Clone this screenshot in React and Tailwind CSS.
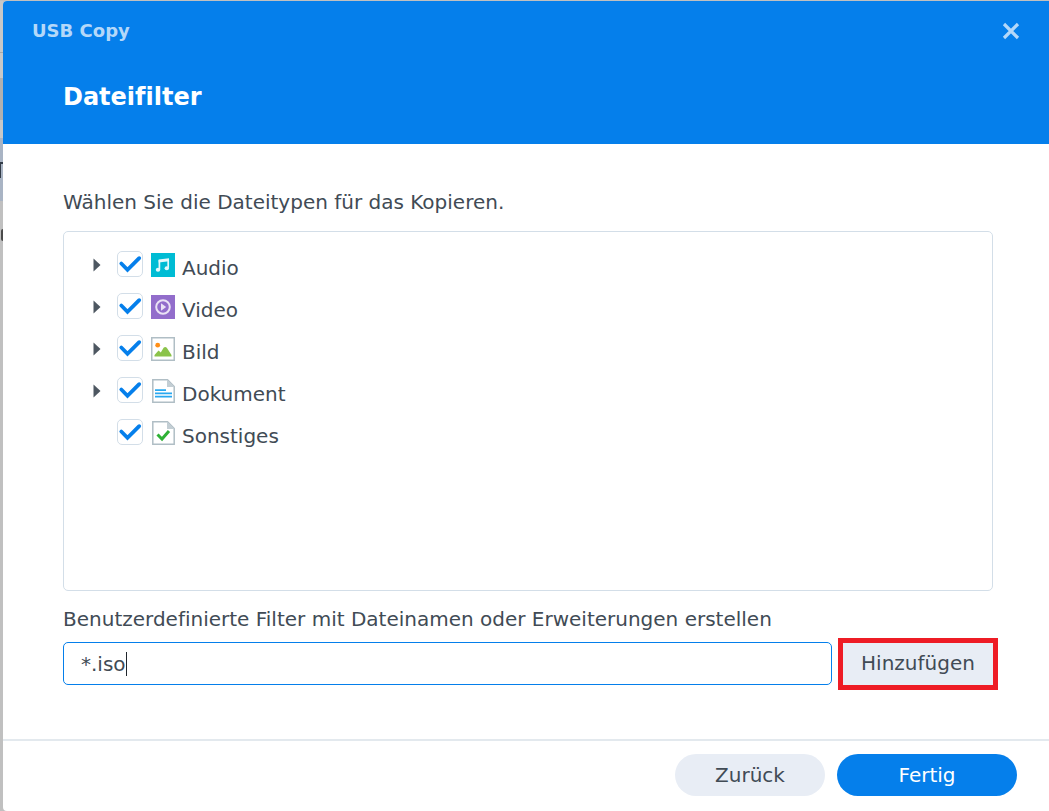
import React, { useState } from 'react';

const AudioIcon = () => (
  <svg width="24" height="24" viewBox="0 0 24 24" aria-hidden="true">
    <rect width="24" height="24" fill="#00bcd4" />
    <path d="M8.4 16.5 V7 M17.2 14.8 V6" fill="none" stroke="#e6f8fb" strokeWidth="1.7" />
    <path d="M7.6 6.4 L18 5.2 V8.2 L7.6 9.4 Z" fill="#e6f8fb" />
    <ellipse cx="7" cy="16.7" rx="2.2" ry="2" fill="#e6f8fb" />
    <ellipse cx="15.8" cy="15.2" rx="2.2" ry="2" fill="#e6f8fb" />
  </svg>
);

const VideoIcon = () => (
  <svg width="24" height="24" viewBox="0 0 24 24" aria-hidden="true">
    <rect width="24" height="24" fill="#926dcb" />
    <circle cx="12" cy="12" r="6.8" fill="none" stroke="#eae2f5" strokeWidth="2" />
    <path d="M10 8.2 L15.2 12 L10 15.8 Z" fill="#eae2f5" />
  </svg>
);

const ImageIcon = () => (
  <svg width="24" height="24" viewBox="0 0 24 24" aria-hidden="true">
    <rect x="0.75" y="0.75" width="22.5" height="22.5" fill="#fff" stroke="#b0bec5" strokeWidth="1.5" />
    <circle cx="6.7" cy="8.2" r="2.4" fill="#ff8f17" />
    <path
      d="M3.5 19.5 V18 L7.5 13.5 L9.8 15.4 L12.6 10.8 Q14.2 9.4 15.8 10.8 L20.5 18 V19.5 Z"
      fill="#8bc34a"
    />
  </svg>
);

const Sheet = ({ children }) => (
  <svg width="24" height="24" viewBox="0 0 24 24" aria-hidden="true">
    <path d="M1.8 0.8 H16.5 L23.2 7.5 V23.2 H1.8 Z" fill="#fff" stroke="#b0bec5" strokeWidth="1.5" />
    <path d="M16 0.5 L23.5 8 H16 Z" fill="#c3ced4" />
    {children}
  </svg>
);

const DocumentIcon = () => (
  <Sheet>
    <path d="M4 11.2 H15 M4 14.4 H21 M4 17.6 H21" stroke="#29a8f0" strokeWidth="1.7" />
  </Sheet>
);

const OtherIcon = () => (
  <Sheet>
    <path d="M6.5 13.5 L11 18 L18 10" fill="none" stroke="#2eb135" strokeWidth="3" />
  </Sheet>
);

const fileTypes = [
  { id: 'audio', label: 'Audio', Icon: AudioIcon, expandable: true },
  { id: 'video', label: 'Video', Icon: VideoIcon, expandable: true },
  { id: 'image', label: 'Bild', Icon: ImageIcon, expandable: true },
  { id: 'document', label: 'Dokument', Icon: DocumentIcon, expandable: true },
  { id: 'other', label: 'Sonstiges', Icon: OtherIcon, expandable: false },
];

const FileTypeRow = ({ type, checked, onToggle }) => {
  const { id, label, Icon, expandable } = type;

  return (
    <li className="flex h-[42px] items-center">
      <div className="flex w-6 items-center">
        {expandable && (
          <button type="button" aria-label={`${label} erweitern`} className="cursor-pointer">
            <svg width="8" height="14" viewBox="0 0 8 14">
              <path d="M0.5 0.5 L7.5 7 L0.5 13.5 Z" fill="#4d5761" />
            </svg>
          </button>
        )}
      </div>
      <div className="grid pb-[2px]">
        <input
          id={id}
          type="checkbox"
          checked={checked}
          onChange={() => onToggle(id)}
          className="col-start-1 row-start-1 size-[26px] appearance-none rounded-[5px] border border-[#d3dee8] bg-white"
        />
        {checked && (
          <svg
            width="26"
            height="26"
            viewBox="0 0 26 26"
            aria-hidden="true"
            className="pointer-events-none col-start-1 row-start-1"
          >
            <path d="M4.3 12.5 L10.5 18.8 L22.2 7.2" fill="none" stroke="#057feb" strokeWidth="3.8" strokeLinecap="round" />
          </svg>
        )}
      </div>
      <label htmlFor={id} className="ml-2 flex items-center gap-[7px]">
        <Icon />
        <span className="pt-[6px]">{label}</span>
      </label>
    </li>
  );
};

const App = () => {
  const [selected, setSelected] = useState(fileTypes.map((t) => t.id));
  const [filter, setFilter] = useState('*.iso');

  const handleToggle = (id) => {
    setSelected((prev) => (prev.includes(id) ? prev.filter((x) => x !== id) : [...prev, id]));
  };

  return (
    <div className="flex min-h-screen bg-[#c0c0c0] pt-px font-['DejaVu_Sans',Verdana,sans-serif] text-[20px] leading-6 text-[#414b55] [font-variant-ligatures:none]">
      {/* Edge of the page behind the dialog */}
      <div className="flex w-[3px] shrink-0 flex-col" aria-hidden="true">
        <div className="h-[52px] border-b border-[#a9a9a9] bg-[#c8c8c8]" />
        <div className="h-[25px] bg-[#c8c8c8]" />
        <div className="h-[42px] bg-[#b0b0b0]" />
        <div className="h-[18px] bg-[#c8c8c8]" />
        <div className="flex h-[63px] flex-col items-end bg-[#a9b4c4] pt-6">
          <div className="h-4 w-[3px] border-t-2 border-l border-[#333c48]" />
        </div>
        <div className="flex h-[60px] flex-col items-end pt-7">
          <div className="h-3 w-[2px] rounded-l-sm bg-[#4a4a4a]" />
        </div>
      </div>

      <div
        role="dialog"
        aria-labelledby="dialog-title"
        className="flex min-w-0 flex-1 flex-col overflow-hidden rounded-l-[4px] bg-white"
      >
        {/* Header */}
        <header className="h-[143px] bg-[#057feb] pr-7 pl-[29px]">
          <div className="flex h-[60px] items-center justify-between">
            <span className="text-[18px] font-bold text-[#b4d8f9]">USB Copy</span>
            <button type="button" aria-label="Schließen" className="cursor-pointer">
              <svg width="20" height="20" viewBox="0 0 20 20">
                <path d="M3 3 L17 17 M17 3 L3 17" stroke="#b4d8f9" strokeWidth="3.2" />
              </svg>
            </button>
          </div>
          <h1 id="dialog-title" className="pt-5 pl-[31px] text-[24px] leading-8 font-bold text-white">
            Dateifilter
          </h1>
        </header>

        {/* Content */}
        <main className="flex flex-1 flex-col pt-[46px] pr-14 pb-[54px] pl-[60px]">
          <p>Wählen Sie die Dateitypen für das Kopieren.</p>
          <ul className="mt-[17px] min-h-[252px] flex-1 rounded-[5px] border border-[#d3dee8] py-3 pl-[29px]">
            {fileTypes.map((type) => (
              <FileTypeRow
                key={type.id}
                type={type}
                checked={selected.includes(type.id)}
                onToggle={handleToggle}
              />
            ))}
          </ul>
          <label htmlFor="filter" className="mt-4">
            Benutzerdefinierte Filter mit Dateinamen oder Erweiterungen erstellen
          </label>
          <div className="mt-[11px] flex items-end gap-[11px]">
            <div className="flex h-[43px] min-w-0 flex-1 items-center rounded-[5px] border border-[#057feb] pl-[17px]">
              <input
                id="filter"
                type="text"
                value={filter}
                onChange={(e) => setFilter(e.target.value)}
                className="field-sizing-content caret-transparent outline-none"
              />
              <span className="h-6 w-px bg-[#20262c]" />
            </div>
            <button
              type="button"
              className="h-[42px] w-[150px] cursor-pointer bg-[#e8edf5] pb-[2px] outline-[5px] outline-[#ee1c25]"
            >
              Hinzufügen
            </button>
          </div>
        </main>

        {/* Footer */}
        <footer className="flex justify-end gap-3 border-t-2 border-[#e3e9ee] pt-[13px] pr-8 pb-[15px]">
          <button type="button" className="h-[42px] w-[150px] cursor-pointer rounded-full bg-[#e8edf5]">
            Zurück
          </button>
          <button type="button" className="h-[42px] w-[180px] cursor-pointer rounded-full bg-[#057feb] text-white">
            Fertig
          </button>
        </footer>
      </div>
    </div>
  );
};

export default App;
